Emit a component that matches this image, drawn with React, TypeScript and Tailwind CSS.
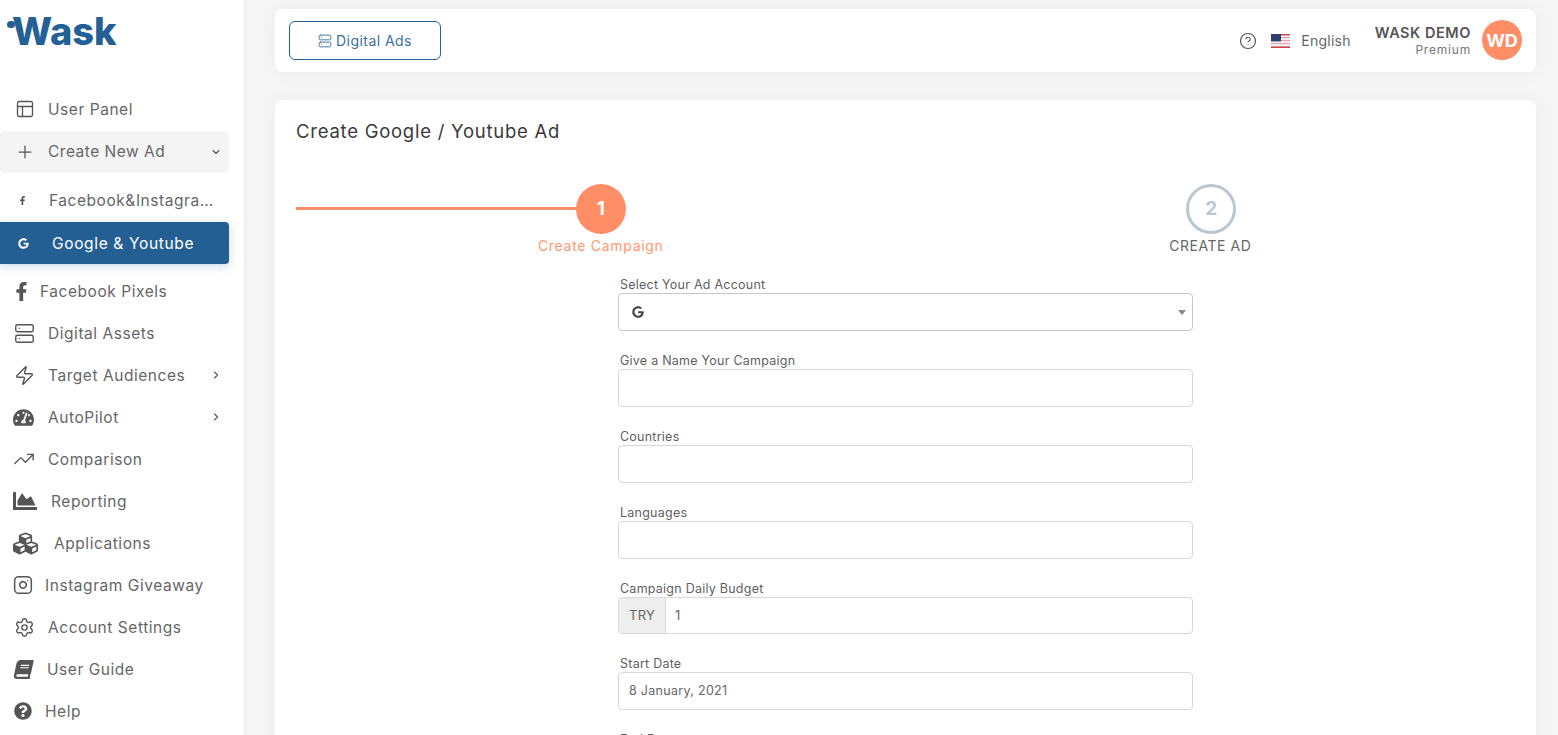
import React from "react";
import { PanelsTopLeft, Plus, ChevronDown, ChevronRight, Server, Zap, TrendingUp, Instagram, Settings, CircleHelp } from "lucide-react";
import { FaFacebookF, FaGoogle, FaTachometerAlt, FaChartArea, FaCubes, FaBook, FaQuestionCircle } from "react-icons/fa";

type Row = { label: string; icon: React.ReactNode; gap: string; chevron?: boolean };

const rows: Row[] = [
  { label: "Facebook Pixels", icon: <FaFacebookF size={19} />, gap: "pl-[12px] w-[40px]" },
  { label: "Digital Assets", icon: <Server size={21} strokeWidth={1.6} />, gap: "pl-[14px] w-[48px]" },
  { label: "Target Audiences", icon: <Zap size={21} strokeWidth={1.6} />, gap: "pl-[14px] w-[48px]", chevron: true },
  { label: "AutoPilot", icon: <FaTachometerAlt size={21} />, gap: "pl-[13px] w-[48px]", chevron: true },
  { label: "Comparison", icon: <TrendingUp size={22} strokeWidth={1.5} />, gap: "pl-[13px] w-[48px]" },
  { label: "Reporting", icon: <FaChartArea size={24} />, gap: "pl-[13px] w-[51px]" },
  { label: "Applications", icon: <FaCubes size={25} />, gap: "pl-[13px] w-[54px]" },
  { label: "Instagram Giveaway", icon: <Instagram size={20} strokeWidth={1.8} />, gap: "pl-[13px] w-[45px]" },
  { label: "Account Settings", icon: <Settings size={21} strokeWidth={1.6} />, gap: "pl-[14px] w-[48px]" },
  { label: "User Guide", icon: <FaBook size={19} className="-skew-x-12" />, gap: "pl-[14px] w-[47px]" },
  { label: "Help", icon: <FaQuestionCircle size={18} />, gap: "pl-[14px] w-[45px]" },
];

const navText = "pt-[2px] text-[15.5px] tracking-[0.55px] text-[#666]";
const labelText = "h-[18px] pl-[2px] text-[12.5px] leading-[20px] tracking-[0.24px] text-[#5f5f5f]";

function Flag() {
  return (
    <svg width="19" height="14" viewBox="0 0 19 14" className="block">
      <rect width="19" height="14" fill="#f4f4f6" />
      <rect y="0" width="19" height="1.4" fill="#c8434c" />
      <rect y="3" width="19" height="1.2" fill="#e6a5a9" />
      <rect y="6" width="19" height="1.2" fill="#e6a5a9" />
      <rect y="9" width="19" height="1.2" fill="#e6a5a9" />
      <rect y="12.4" width="19" height="1.6" fill="#c8434c" />
      <rect width="10" height="7.4" fill="#2f3f73" />
    </svg>
  );
}

function Field({ label, value }: { label: string; value?: string }) {
  return (
    <div className="mb-[20px]">
      <div className={labelText}>{label}</div>
      <div className="flex h-[38px] items-center rounded-[4px] border border-[#d8d8d8] bg-white pl-[10px] pt-[1px] text-[12.5px] tracking-[0.3px] text-[#666]">
        {value}
      </div>
    </div>
  );
}

export default function App() {
  return (
    <div className="flex h-[735px] w-[1558px] overflow-hidden bg-[#f6f6f6] font-[Inter,sans-serif]">
      <aside className="h-full w-[244px] shrink-0 bg-white shadow-[1px_0_4px_rgba(0,0,0,0.06)]">
        <div className="relative h-[88px]">
          <span className="absolute left-[12px] top-[7px] text-[38px] font-extrabold leading-[48px] text-[#236095]">
            Wask
          </span>
          <span className="absolute left-[7px] top-[21px] h-[7px] w-[8px] rounded-full bg-[#236095]" />
        </div>
        <div className="flex h-[42px] w-[229px] items-center text-[#555]">
          <span className="w-[48px] pl-[15px]"><PanelsTopLeft size={20} strokeWidth={1.6} /></span>
          <span className={navText}>User Panel</span>
        </div>
        <div className="mt-px flex h-[42px] w-[229px] items-center rounded-l-[4px] rounded-r-[6px] bg-[#f5f5f5] text-[#555]">
          <span className="w-[48px] pl-[15px]"><Plus size={20} strokeWidth={1.5} /></span>
          <span className="text-[15.5px] tracking-[0.5px] text-[#666]">Create New Ad</span>
          <ChevronDown size={12} strokeWidth={2.2} className="ml-auto mr-[7px]" />
        </div>
        <div className="mt-[6px] flex h-[42px] w-[229px] items-center text-[#555]">
          <span className="w-[49px] pl-[18px]"><FaFacebookF size={9} /></span>
          <span className={`w-[168px] truncate ${navText}`}>Facebook&amp;Instagram Ads</span>
        </div>
        <div className="mb-[6px] mt-px flex h-[42px] w-[229px] items-center rounded-r-[4px] bg-[#245f93] text-white shadow-[0_2px_10px_rgba(36,95,147,0.25)]">
          <span className="w-[52px] pl-[18px]"><FaGoogle size={11} /></span>
          <span className="pt-[2px] text-[15.5px] tracking-[0.65px]">Google &amp; Youtube</span>
        </div>
        {rows.map((r) => (
          <div key={r.label} className="flex h-[42px] w-[229px] items-center text-[#555]">
            <span className={`shrink-0 ${r.gap}`}>{r.icon}</span>
            <span className={navText}>{r.label}</span>
            {r.chevron && <ChevronRight size={12} strokeWidth={2.2} className="ml-auto mr-[7px]" />}
          </div>
        ))}
      </aside>

      <main className="flex min-w-0 flex-1 flex-col pl-[31px] pr-[22px] pt-[9px]">
        <header className="flex h-[63px] shrink-0 items-center rounded-[8px] bg-white px-[14px] shadow-[0_0_20px_rgba(0,0,0,0.05)]">
          <div className="flex h-[39px] w-[152px] items-center justify-center gap-[4px] rounded-[6px] border border-[#245f93] text-[14px] tracking-[0.45px] text-[#3a6f9e]">
            <Server size={14} strokeWidth={1.6} />
            Digital Ads
          </div>
          <CircleHelp size={18} strokeWidth={1.6} className="ml-auto text-[#555]" />
          <span className="ml-[14px]"><Flag /></span>
          <span className="ml-[11px] text-[14px] tracking-[0.25px] text-[#666]">English</span>
          <div className="ml-[24px] flex flex-col items-end">
            <span className="text-[14.5px] font-semibold leading-[18px] tracking-[0.55px] text-[#555]">WASK DEMO</span>
            <span className="text-[12px] leading-[16px] tracking-[0.8px] text-[#777]">Premium</span>
          </div>
          <div className="mb-[1px] ml-[11px] flex h-[40px] w-[40px] items-center justify-center rounded-full bg-[#ff8d66] text-[18px] font-bold text-white">WD</div>
        </header>

        <section className="mt-[28px] flex-1 rounded-t-[8px] bg-white px-[21px] shadow-[0_0_20px_rgba(0,0,0,0.05)]">
          <h1 className="pt-[19px] text-[18.5px] font-normal leading-[24px] tracking-[0.75px] text-[#3a3a3a]">Create Google / Youtube Ad</h1>

          <div className="mt-[41px] grid h-[75px] grid-cols-2">
            <div className="relative flex flex-col items-center">
              <div className="absolute left-0 right-1/2 top-[23px] h-[3px] bg-[#ff8d66]" />
              <div className="relative flex h-[50px] w-[50px] items-center justify-center rounded-full bg-[#ff8d66] text-[19px] font-bold text-white">1</div>
              <div className="mt-[3px] text-[14px] leading-[18px] tracking-[0.7px] text-[#ff9872]">Create Campaign</div>
            </div>
            <div className="flex flex-col items-center">
              <div className="ml-[2px] flex h-[50px] w-[50px] items-center justify-center rounded-full border-[3px] border-[#bac7d3] text-[19px] font-bold text-[#bac7d3]">2</div>
              <div className="mt-[3px] text-[14px] leading-[18px] tracking-[0.55px] text-[#666]">CREATE AD</div>
            </div>
          </div>

          <div className="mx-auto mt-[16px] w-[575px]">
            <div className="mb-[20px]">
              <div className={labelText}>Select Your Ad Account</div>
              <div className="flex h-[38px] items-center rounded-[4px] border border-[#c8c8c8] bg-white pl-[13px] pr-[6px] text-[#444]">
                <FaGoogle size={12} />
                <span className="ml-auto h-0 w-0 border-x-[4px] border-t-[5px] border-x-transparent border-t-[#888]" />
              </div>
            </div>
            <Field label="Give a Name Your Campaign" />
            <Field label="Countries" />
            <Field label="Languages" />
            <div className="mb-[20px]">
              <div className={labelText}>Campaign Daily Budget</div>
              <div className="flex h-[37px] overflow-hidden rounded-[4px] border border-[#d8d8d8] text-[13px] tracking-[0.2px] text-[#666]">
                <span className="flex w-[47px] items-center justify-center border-r border-[#d8d8d8] bg-[#eeeeee]">TRY</span>
                <span className="flex items-center pl-[9px]">1</span>
              </div>
            </div>
            <Field label="Start Date" value="8 January, 2021" />
            <Field label="End Date" />
          </div>
        </section>
      </main>
    </div>
  );
}
